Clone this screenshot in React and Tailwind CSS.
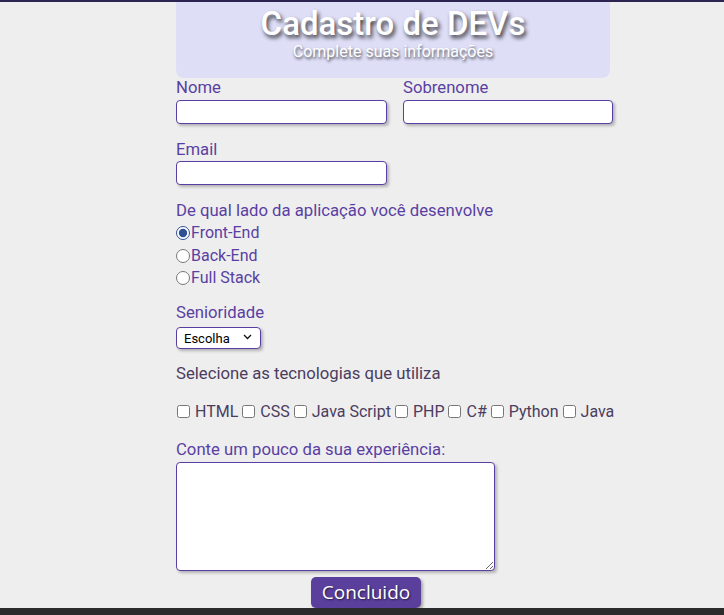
import React from 'react';

const labelCls = 'block text-[16.7px] leading-[19px] text-[#5a3fa3]';
const inputCls =
  'block h-[24px] bg-white border border-[#5a3fa3] rounded-[4px] shadow-[2px_2px_3px_rgba(0,0,0,0.25)] outline-none';

const techs = ['HTML', 'CSS', 'Java Script', 'PHP', 'C#', 'Python', 'Java'];

export default function App() {
  return (
    <div
      className="min-h-[615px] bg-[#eeeeee] flex flex-col"
      style={{ fontFamily: 'Roboto, "Noto Sans", sans-serif' }}
    >
      <div className="h-[2px] bg-[#2d2452]" />

      <div className="ml-[176px] w-[440px] flex flex-col">
        {/* Header */}
        <div className="w-[434px] h-[76px] bg-[#dedef7] rounded-b-[8px] flex flex-col items-center">
          <h1 className="mt-[3px] text-[33px] leading-[38px] font-medium text-white [text-shadow:2px_3px_4px_rgba(0,0,0,0.75)]">
            Cadastro de DEVs
          </h1>
          <p className="text-[16px] leading-[18px] text-white [text-shadow:1px_2px_3px_rgba(0,0,0,0.7)]">
            Complete suas informações
          </p>
        </div>

        {/* Nome / Sobrenome */}
        <div className="flex gap-[16px]">
          <div className="w-[211px]">
            <label className={labelCls}>Nome</label>
            <input className={inputCls + ' w-[211px] mt-[3px]'} />
          </div>
          <div className="w-[211px]">
            <label className={labelCls}>Sobrenome</label>
            <input className={inputCls + ' w-[210px] mt-[3px]'} />
          </div>
        </div>

        {/* Email */}
        <label className={labelCls + ' mt-[16px]'}>Email</label>
        <input className={inputCls + ' w-[211px] mt-[2px] h-[23px]'} />

        {/* Lado */}
        <label className={labelCls + ' mt-[16px]'}>De qual lado da aplicação você desenvolve</label>
        <div className="flex flex-col mt-[2px]">
          {['Front-End', 'Back-End', 'Full Stack'].map((opt, i) => (
            <label key={opt} className="flex items-center h-[22.5px] text-[16px] text-[#5a3fa3]">
              <input
                type="radio"
                name="lado"
                defaultChecked={i === 0}
                className="m-0 w-[14px] h-[14px] accent-[#2d4f94]"
              />
              <span className="ml-[1px]">{opt}</span>
            </label>
          ))}
        </div>

        {/* Senioridade */}
        <label className={labelCls + ' mt-[13px]'}>Senioridade</label>
        <div className="relative mt-[4px] w-[85px] h-[22px]">
          <select className="appearance-none w-[85px] h-[22px] bg-white border border-[#5a3fa3] rounded-[4px] text-[13px] text-black pl-[7px] shadow-[2px_2px_3px_rgba(0,0,0,0.25)] outline-none">
            <option>Escolha</option>
          </select>
          <svg
            className="absolute right-[9px] top-[8px] pointer-events-none"
            width="9"
            height="6"
            viewBox="0 0 9 6"
            fill="none"
            stroke="#111"
            strokeWidth="1.3"
          >
            <path d="M1 1l3.5 3.5L8 1" />
          </svg>
        </div>

        {/* Tecnologias */}
        <p className="mt-[16px] text-[16.7px] leading-[19px] text-[#4b3d5e]">
          Selecione as tecnologias que utiliza
        </p>
        <div className="mt-[19px] flex items-center text-[16px] leading-[20px] text-[#4b3d5e] whitespace-nowrap">
          {techs.map((t, i) => (
            <label key={t} className={'flex items-center ' + (i > 0 ? 'ml-[4px]' : 'ml-[1px]')}>
              <input type="checkbox" className="m-0 w-[13px] h-[13px]" />
              <span className="ml-[5px]">{t}</span>
            </label>
          ))}
        </div>

        {/* Experiência */}
        <label className={labelCls + ' mt-[18px]'}>Conte um pouco da sua experiência:</label>
        <textarea className="mt-[3px] w-[319px] h-[109px] bg-white border border-[#5a3fa3] rounded-[4px] shadow-[2px_2px_3px_rgba(0,0,0,0.25)] outline-none" />

        <button
          className="mt-[6px] ml-[135px] w-[110px] h-[31px] bg-[#5a3f9c] text-white text-[19px] leading-[22px] rounded-[5px] shadow-[2px_2px_3px_rgba(0,0,0,0.3)] [text-shadow:1px_1px_2px_rgba(0,0,0,0.6)]"
          style={{ fontFamily: '"Open Sans", sans-serif' }}
        >
          Concluido
        </button>
      </div>

      <div className="mt-auto h-[8px] bg-[#2b2b2b]" />
    </div>
  );
}
